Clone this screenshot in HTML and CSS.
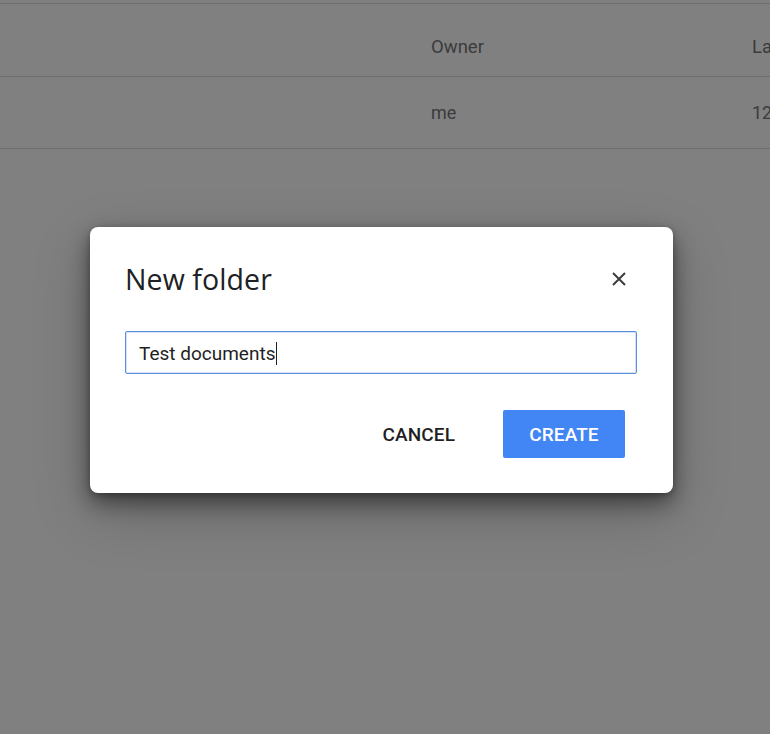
FILE: index.html
```html
<!DOCTYPE html>
<html>
<head>
<meta charset="utf-8">
<link rel="stylesheet" href="styles.css">
</head>
<body>
<div class="page">
  <div class="table">
    <div class="row head">
      <div class="c-name"></div>
      <div class="c-owner">Owner</div>
      <div class="c-mod">Last modified</div>
    </div>
    <div class="row">
      <div class="c-name"></div>
      <div class="c-owner">me</div>
      <div class="c-mod">12:04 PM</div>
    </div>
  </div>
</div>
<div class="dialog">
  <div class="d-head">
    <h1 class="d-title">New folder</h1>
    <button class="d-close" aria-label="Close">
      <svg width="14" height="14" viewBox="0 0 14 14"><path d="M1 1L13 13M13 1L1 13" stroke="#3c3c3c" stroke-width="2" fill="none"/></svg>
    </button>
  </div>
  <div class="d-input"><span>Test documents</span><span class="caret"></span></div>
  <div class="d-actions">
    <button class="btn-text">CANCEL</button>
    <button class="btn-primary">CREATE</button>
  </div>
</div>
</body>
</html>
```
FILE: styles.css
```css
html, body { margin: 0; padding: 0; }
body {
  width: 770px;
  height: 734px;
  overflow: hidden;
  background: #808080;
  font-family: Roboto, "Liberation Sans", sans-serif;
  position: relative;
}
.page { padding-top: 3px; }
.table { border-top: 1px solid #6e6e6e; }
.row {
  display: flex;
  align-items: center;
  height: 71px;
  border-bottom: 1px solid #6e6e6e;
  font-size: 18px;
  color: #3b3b3b;
  white-space: nowrap;
  overflow: hidden;
}
.row.head {
  height: 73px;
  padding-top: 13px;
  box-sizing: border-box;
  font-size: 18.5px;
}
.c-name { width: 431px; flex: none; }
.c-owner { width: 321px; flex: none; }
.c-mod { flex: none; }

.dialog {
  position: absolute;
  left: 90px;
  top: 227px;
  width: 583px;
  height: 266px;
  box-sizing: border-box;
  background: #fff;
  border-radius: 8px;
  box-shadow: 0 10px 22px rgba(0,0,0,0.45), 0 20px 60px rgba(0,0,0,0.2), 0 2px 6px rgba(0,0,0,0.25);
  padding: 34px 36px 0 35px;
}
.d-head {
  display: flex;
  align-items: center;
  justify-content: space-between;
  height: 36px;
}
.d-title {
  margin: 0;
  font-family: "Open Sans", Roboto, sans-serif;
  font-weight: 400;
  font-size: 28.5px;
  letter-spacing: 0.1px;
  color: #202124;
}
.d-close {
  border: 0;
  background: none;
  padding: 0;
  margin-right: 11px;
  width: 14px;
  height: 14px;
  display: flex;
}
.d-input {
  margin-top: 34px;
  height: 43px;
  width: 512px;
  box-sizing: border-box;
  border: 1px solid #5b8fdb;
  border-radius: 2px;
  box-shadow: inset 0 0 0 1px rgba(91,143,219,0.25);
  display: flex;
  align-items: center;
  padding-left: 13px;
  padding-top: 2px;
  font-size: 19px;
  color: #1f1f1f;
}
.caret {
  display: inline-block;
  width: 1px;
  height: 23px;
  background: #222;
  margin-left: 1px;
}
.d-actions {
  display: flex;
  justify-content: flex-end;
  align-items: center;
  gap: 48px;
  margin-top: 36px;
  padding-right: 12px;
}
.btn-text, .btn-primary {
  font-family: Roboto, "Liberation Sans", sans-serif;
  font-weight: 500;
  font-size: 19px;
  border: 0;
  letter-spacing: 0.1px;
}
.btn-text {
  background: none;
  color: #1f1f1f;
  padding: 0;
}
.btn-primary {
  background: #4285f4;
  color: #fff;
  width: 122px;
  height: 48px;
  border-radius: 2px;
  padding: 0;
}
```
